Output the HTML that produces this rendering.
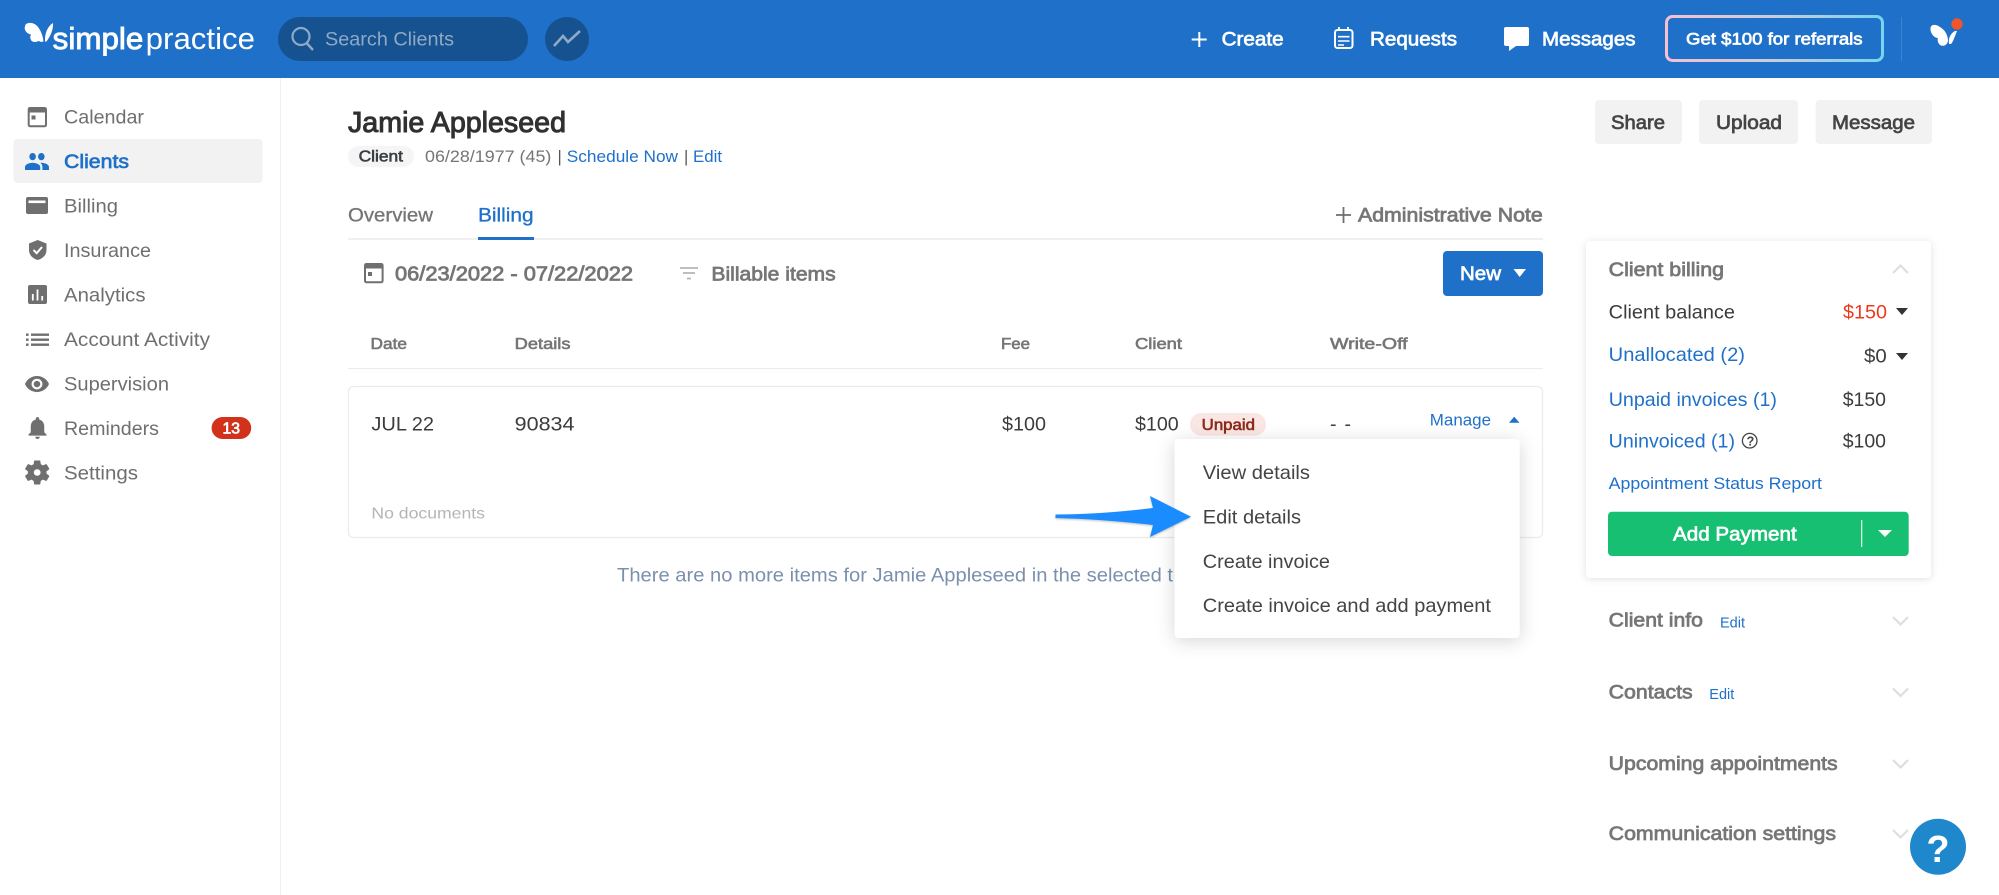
<!DOCTYPE html>
<html lang="en">
<head>
<meta charset="utf-8">
<title>Jamie Appleseed - SimplePractice</title>
<style>
html,body{margin:0;padding:0;background:#fff;width:1999px;height:895px;overflow:hidden}
svg{display:block;font-family:"Liberation Sans",Arial,sans-serif}
text{white-space:pre}
#root{filter:blur(.35px)}
.nav{font-size:19.5px;fill:#6f6f6f}
.blue{fill:#1f70c9}
.hd{font-size:19.5px;fill:#767676;stroke:#767676;stroke-width:.75}
.row{font-size:19.5px;fill:#3c3c3c}
.th{font-size:16px;fill:#757575;stroke:#757575;stroke-width:.6}
.wh{fill:#fff}
.wsb{fill:#fff;stroke:#fff;stroke-width:.7}
.btn{font-size:19.5px;fill:#444;stroke:#444;stroke-width:.7}
.menu{font-size:19.5px;fill:#444}
.m{stroke-width:.3}
.card{filter:drop-shadow(0 1px 4px rgba(0,0,0,.12))}
.menuBox{filter:drop-shadow(0 3px 9px rgba(0,0,0,.16))}
.chev{fill:none;stroke:#dedede;stroke-width:2.2}
</style>
</head>
<body>
<svg width="1999" height="895" viewBox="0 0 1999 895" xmlns="http://www.w3.org/2000/svg">
<defs>
<linearGradient id="ref" x1="0" x2="1" y1="0" y2="0"><stop offset="0" stop-color="#f6c0cf"/><stop offset=".5" stop-color="#c9cdd8"/><stop offset="1" stop-color="#78d3ee"/></linearGradient>
</defs>
<g id="root">
<rect x="-2" y="-2" width="2003" height="899" fill="#fff"/>

<!-- Header -->
<rect x="-2" y="-2" width="2003" height="80" fill="#1f70c9"/>
<g fill="#fff">
<path d="M25.5 24.5C29 21.5 35 23 38 27C41 31 43 36 43.500 41.500C41 42.500 39 41 38.500 41C36 42.500 32 42.500 31 40C30 38 30 36 31 34.500C27 34 24 30 24.800 27Z"/>
<path d="M45 41C44.500 33 48 26 53 23C53.500 30 50 37 46 42Z"/>
</g>
<text x="52.7" y="49" font-size="31" fill="#fff" stroke="#fff" stroke-width=".9" textLength="90.6" lengthAdjust="spacingAndGlyphs">simple</text>
<text x="145.7" y="49" font-size="31" fill="#fff" textLength="109.3" lengthAdjust="spacingAndGlyphs">practice</text>

<rect x="278" y="17" width="250" height="44" rx="22" fill="#15528f"/>
<ellipse cx="301" cy="36.5" rx="8.5" ry="8.5" fill="none" stroke="#8fa9c6" stroke-width="2.2"/>
<path d="M307 43.5L313 50" stroke="#8fa9c6" stroke-width="2.4" fill="none"/>
<text x="325" y="45.5" font-size="19.5" fill="#8fa9c6" textLength="129" lengthAdjust="spacingAndGlyphs">Search Clients</text>
<circle cx="567" cy="39" r="22" fill="#15528f"/>
<path d="M554 46L563 36L568 42L580 31" fill="none" stroke="#8fa9c6" stroke-width="2.6"/>

<path d="M1199.3 32V47M1191.7 39.5H1206.7" stroke="#fff" stroke-width="2" fill="none"/>
<text x="1221.6" y="45.5" font-size="19.5" class="wsb" textLength="62" lengthAdjust="spacingAndGlyphs">Create</text>
<rect x="1335" y="30" width="17.5" height="18" rx="2.5" fill="none" stroke="#fff" stroke-width="2"/>
<path d="M1339 27V31M1348 27V31" stroke="#fff" stroke-width="1.8"/>
<path d="M1338 36.7H1349.5M1338 41H1349.5M1338 45H1344" stroke="#fff" stroke-width="1.6"/>
<text x="1370" y="45.5" font-size="19.5" class="wsb" textLength="87" lengthAdjust="spacingAndGlyphs">Requests</text>
<path d="M1506 27H1527Q1529 27 1529 29V44Q1529 46 1527 46H1516L1509 51V46H1506Q1504 46 1504 44V29Q1504 27 1506 27Z" fill="#fff"/>
<text x="1542" y="45.5" font-size="19.5" class="wsb" textLength="93.5" lengthAdjust="spacingAndGlyphs">Messages</text>
<rect x="1666.5" y="16.5" width="216" height="44" rx="6" fill="none" stroke="url(#ref)" stroke-width="3"/>
<text x="1686" y="44.5" font-size="17" class="wsb" textLength="176.6" lengthAdjust="spacingAndGlyphs">Get $100 for referrals</text>
<rect x="1901" y="17" width="1" height="44" fill="#3c83d2"/>
<g fill="#fff">
<path d="M1930.5 28C1931 24 1936 24 1940 27C1945 30 1948 35 1948 41C1947 45 1944 46.5 1941 45.5C1938 44 1937 40 1938 38C1934 38 1930 33 1930.5 28Z"/>
<path d="M1949 44C1948 38 1951 33 1955 31L1957 31C1955 36 1953 42 1951 44Z"/>
</g>
<circle cx="1957" cy="24" r="5.7" fill="#f0562a"/>

<!-- Sidebar -->
<rect x="280" y="78" width="1" height="817" fill="#f0f0f0"/>
<rect x="13.5" y="139" width="249" height="44" rx="4" fill="#f2f2f2"/>

<rect x="28.7" y="108" width="17.3" height="18.3" rx="1.5" fill="none" stroke="#6f6f6f" stroke-width="2"/>
<rect x="28" y="107.5" width="18.5" height="5" fill="#6f6f6f"/>
<rect x="31.5" y="115.5" width="4" height="4" fill="#6f6f6f"/>
<text x="64" y="123.5" class="nav" textLength="80" lengthAdjust="spacingAndGlyphs">Calendar</text>

<path transform="translate(23.9 147) scale(1.09 1.21)" fill="#1f70c9" d="M16 11c1.66 0 2.99-1.34 2.99-3S17.66 5 16 5c-1.66 0-3 1.34-3 3s1.34 3 3 3zm-8 0c1.66 0 2.99-1.34 2.99-3S9.66 5 8 5C6.34 5 5 6.34 5 8s1.34 3 3 3zm0 2c-2.33 0-7 1.17-7 3.5V19h14v-2.5c0-2.33-4.67-3.5-7-3.5zm8 0c-.29 0-.62.02-.97.05 1.16.84 1.97 1.97 1.97 3.45V19h6v-2.5c0-2.33-4.67-3.5-7-3.5z"/>
<text x="64" y="168" font-size="19.5" fill="#1f70c9" stroke="#1f70c9" stroke-width=".7" textLength="65" lengthAdjust="spacingAndGlyphs">Clients</text>

<rect x="26" y="197" width="22" height="17" rx="2" fill="#6f6f6f"/>
<rect x="28.5" y="200.5" width="17" height="2.6" fill="#fff"/>
<text x="64" y="212.5" class="nav" textLength="54" lengthAdjust="spacingAndGlyphs">Billing</text>

<path d="M37.7 240L46.5 243.5V250C46.5 255 43 258.5 37.7 260C32.5 258.5 29 255 29 250V243.5Z" fill="#6f6f6f"/>
<path d="M33.5 250L36.7 253.2L42 247" fill="none" stroke="#fff" stroke-width="2"/>
<text x="64" y="257" class="nav" textLength="87" lengthAdjust="spacingAndGlyphs">Insurance</text>

<rect x="28" y="285" width="19" height="19" rx="2" fill="#6f6f6f"/>
<path d="M32.8 294V300.5M37.5 289.5V300.5M42.2 296V300.5" stroke="#fff" stroke-width="1.8"/>
<text x="64" y="301.5" class="nav" textLength="81.5" lengthAdjust="spacingAndGlyphs">Analytics</text>

<g fill="#6f6f6f">
<rect x="26" y="333.5" width="2.6" height="2.4"/><rect x="31" y="333.5" width="18" height="2.4"/>
<rect x="26" y="338.5" width="2.6" height="2.4"/><rect x="31" y="338.5" width="18" height="2.4"/>
<rect x="26" y="343.5" width="2.6" height="2.4"/><rect x="31" y="343.5" width="18" height="2.4"/>
</g>
<text x="64" y="346" class="nav" textLength="146" lengthAdjust="spacingAndGlyphs">Account Activity</text>

<path transform="translate(23.9 371.2) scale(1.09 1.07)" fill="#6f6f6f" d="M12 4.5C7 4.5 2.73 7.61 1 12c1.73 4.39 6 7.5 11 7.5s9.27-3.11 11-7.5c-1.73-4.39-6-7.5-11-7.5zM12 17c-2.76 0-5-2.24-5-5s2.24-5 5-5 5 2.24 5 5-2.24 5-5 5zm0-8c-1.66 0-3 1.34-3 3s1.34 3 3 3 3-1.34 3-3-1.34-3-3-3z"/>
<text x="64" y="390.5" class="nav" textLength="105" lengthAdjust="spacingAndGlyphs">Supervision</text>

<path transform="translate(24 414.2) scale(1.125 1.128)" fill="#6f6f6f" d="M12 22c1.1 0 2-.9 2-2h-4c0 1.1.89 2 2 2zm6-6v-5c0-3.07-1.64-5.64-4.5-6.32V4c0-.83-.67-1.5-1.5-1.5s-1.5.67-1.5 1.5v.68C7.63 5.36 6 7.92 6 11v5l-2 2v1h16v-1l-2-2z"/>
<text x="64" y="435" class="nav" textLength="95" lengthAdjust="spacingAndGlyphs">Reminders</text>
<rect x="211.6" y="417" width="39.6" height="22" rx="11" fill="#d2321a"/>
<text x="222.5" y="433.5" font-size="16" class="wsb" textLength="17.5" lengthAdjust="spacingAndGlyphs">13</text>

<path transform="translate(21.6 457.5) scale(1.3 1.25)" fill="#6f6f6f" d="M19.14 12.94c.04-.3.06-.61.06-.94 0-.32-.02-.64-.07-.94l2.03-1.58c.18-.14.23-.41.12-.61l-1.92-3.32c-.12-.22-.37-.29-.59-.22l-2.39.96c-.5-.38-1.03-.7-1.62-.94l-.36-2.54c-.04-.24-.24-.41-.48-.41h-3.84c-.24 0-.43.17-.47.41l-.36 2.54c-.59.24-1.13.57-1.62.94l-2.39-.96c-.22-.08-.47 0-.59.22L2.74 8.87c-.12.21-.08.47.12.61l2.03 1.58c-.05.3-.09.63-.09.94s.02.64.07.94l-2.03 1.58c-.18.14-.23.41-.12.61l1.92 3.32c.12.22.37.29.59.22l2.39-.96c.5.38 1.03.7 1.62.94l.36 2.54c.05.24.24.41.48.41h3.84c.24 0 .44-.17.47-.41l.36-2.54c.59-.24 1.13-.56 1.62-.94l2.39.96c.22.08.47 0 .59-.22l1.92-3.32c.12-.22.07-.47-.12-.61l-2.01-1.58zM12 14.6c-1.43 0-2.6-1.17-2.6-2.6s1.17-2.6 2.6-2.6 2.6 1.17 2.6 2.6-1.17 2.6-2.6 2.6z"/>
<text x="64" y="479.5" class="nav" textLength="74" lengthAdjust="spacingAndGlyphs">Settings</text>

<!-- Client title -->
<text x="348" y="132" font-size="28.5" fill="#303030" stroke="#303030" stroke-width="1" textLength="218" lengthAdjust="spacingAndGlyphs">Jamie Appleseed</text>
<rect x="348" y="146" width="66" height="21" rx="10.5" fill="#f5f5f5"/>
<text x="358.6" y="161.7" font-size="15.5" fill="#3a3f45" stroke="#3a3f45" stroke-width=".6" textLength="44.4" lengthAdjust="spacingAndGlyphs">Client</text>
<text x="425" y="162" font-size="17" fill="#757575" textLength="126.4" lengthAdjust="spacingAndGlyphs">06/28/1977 (45)</text>
<text x="557.5" y="162" font-size="16.5" fill="#555">|</text>
<text x="566.8" y="162" font-size="17" class="blue" textLength="111.2" lengthAdjust="spacingAndGlyphs">Schedule Now</text>
<text x="684" y="162" font-size="16.5" fill="#555">|</text>
<text x="693" y="162" font-size="17" class="blue" textLength="29" lengthAdjust="spacingAndGlyphs">Edit</text>

<!-- Action buttons -->
<rect x="1595" y="100" width="87" height="44" rx="4" fill="#f2f2f2"/>
<text x="1611" y="129" class="btn" textLength="54" lengthAdjust="spacingAndGlyphs">Share</text>
<rect x="1699" y="100" width="99" height="44" rx="4" fill="#f2f2f2"/>
<text x="1716" y="129" class="btn" textLength="66" lengthAdjust="spacingAndGlyphs">Upload</text>
<rect x="1815.6" y="100" width="116.4" height="44" rx="4" fill="#f2f2f2"/>
<text x="1832" y="129" class="btn" textLength="83" lengthAdjust="spacingAndGlyphs">Message</text>

<!-- Tabs -->
<rect x="348" y="238" width="1195" height="2" fill="#f0f0f0"/>
<text x="348" y="221.7" font-size="19.5" fill="#757575" stroke="#757575" class="m" textLength="85" lengthAdjust="spacingAndGlyphs">Overview</text>
<text x="478" y="221.7" font-size="19.5" fill="#1f70c9" stroke="#1f70c9" class="m" textLength="55.6" lengthAdjust="spacingAndGlyphs">Billing</text>
<rect x="478" y="237" width="56" height="3" fill="#1f70c9"/>
<path d="M1343.5 207V223M1336 215H1351" stroke="#6f6f6f" stroke-width="1.8"/>
<text x="1358" y="221.7" class="hd" textLength="184.7" lengthAdjust="spacingAndGlyphs">Administrative Note</text>

<!-- Filters -->
<rect x="365" y="264" width="17.6" height="18.3" rx="1.5" fill="none" stroke="#6f6f6f" stroke-width="2"/>
<rect x="364.5" y="263.5" width="18.6" height="5" fill="#6f6f6f"/>
<rect x="368" y="272" width="4" height="4" fill="#6f6f6f"/>
<text x="395" y="280.5" font-size="20" fill="#757575" stroke="#757575" stroke-width=".8" textLength="238" lengthAdjust="spacingAndGlyphs">06/23/2022 - 07/22/2022</text>
<path d="M680 268H698M683 273H695M687 278.5H691" stroke="#b5b5b5" stroke-width="1.7"/>
<text x="711.4" y="280.3" class="hd" textLength="124.3" lengthAdjust="spacingAndGlyphs">Billable items</text>
<rect x="1443" y="251" width="100" height="45" rx="4" fill="#1f70c9"/>
<text x="1460" y="280" font-size="19.5" class="wsb" textLength="41" lengthAdjust="spacingAndGlyphs">New</text>
<path d="M1513.5 269H1526L1519.7 277Z" fill="#fff"/>

<!-- Table -->
<text x="370.5" y="349" class="th" textLength="36.5" lengthAdjust="spacingAndGlyphs">Date</text>
<text x="514.7" y="349" class="th" textLength="55.8" lengthAdjust="spacingAndGlyphs">Details</text>
<text x="1001" y="349" class="th" textLength="29" lengthAdjust="spacingAndGlyphs">Fee</text>
<text x="1135" y="349" class="th" textLength="47" lengthAdjust="spacingAndGlyphs">Client</text>
<text x="1330" y="349" class="th" textLength="77.6" lengthAdjust="spacingAndGlyphs">Write-Off</text>
<rect x="348" y="368" width="1195" height="1" fill="#ebebeb"/>

<rect x="348.5" y="386.5" width="1194" height="151" rx="5" fill="#fff" stroke="#ebebeb" stroke-width="1.2"/>
<text x="371.4" y="430.7" class="row" textLength="62.6" lengthAdjust="spacingAndGlyphs">JUL 22</text>
<text x="514.7" y="430.7" class="row" textLength="59.8" lengthAdjust="spacingAndGlyphs">90834</text>
<text x="1002" y="430.7" class="row" textLength="44" lengthAdjust="spacingAndGlyphs">$100</text>
<text x="1135" y="430.7" class="row" textLength="43.7" lengthAdjust="spacingAndGlyphs">$100</text>
<rect x="1190" y="413" width="76" height="22.7" rx="11.3" fill="#fae7e4"/>
<text x="1201.7" y="430" font-size="15.5" fill="#8e2a1c" stroke="#8e2a1c" stroke-width=".6" textLength="53.3" lengthAdjust="spacingAndGlyphs">Unpaid</text>
<text x="1330" y="430.7" class="row" textLength="21" lengthAdjust="spacing">- -</text>
<text x="1429.8" y="425.3" font-size="17" class="blue" textLength="61.2" lengthAdjust="spacingAndGlyphs">Manage</text>
<path d="M1509 422.7H1519.5L1514.2 416.7Z" fill="#1f70c9"/>
<text x="371.4" y="518.7" font-size="16" fill="#b5b5b5" textLength="113.6" lengthAdjust="spacingAndGlyphs">No documents</text>

<text x="617" y="581.7" font-size="19.5" fill="#7a90ad" textLength="556" lengthAdjust="spacingAndGlyphs">There are no more items for Jamie Appleseed in the selected t</text>

<!-- Dropdown -->
<rect class="menuBox" x="1174.5" y="439" width="345.2" height="199" rx="4" fill="#fff"/>
<text x="1202.8" y="479" class="menu" textLength="107.2" lengthAdjust="spacingAndGlyphs">View details</text>
<text x="1202.8" y="523.3" class="menu" textLength="98.2" lengthAdjust="spacingAndGlyphs">Edit details</text>
<text x="1202.8" y="568" class="menu" textLength="127.2" lengthAdjust="spacingAndGlyphs">Create invoice</text>
<text x="1202.8" y="612" class="menu" textLength="288.2" lengthAdjust="spacingAndGlyphs">Create invoice and add payment</text>

<!-- Arrow -->
<path d="M1055.5 514.5Q1100 514.5 1153 508L1150 496L1191 516.7L1150 537L1153 525Q1100 519 1055.5 518Z" fill="#1a8cff" style="filter:drop-shadow(0 1px 1px rgba(0,0,0,.25))"/>

<!-- Client billing card -->
<rect class="card" x="1586" y="241" width="345" height="337" rx="4" fill="#fff"/>
<text x="1608.7" y="276" class="hd" textLength="115.3" lengthAdjust="spacingAndGlyphs">Client billing</text>
<path class="chev" d="M1893 273L1900.5 265.5L1908 273"/>
<text x="1608.7" y="318.3" class="row" textLength="126.3" lengthAdjust="spacingAndGlyphs">Client balance</text>
<text x="1843" y="318.3" font-size="19.5" fill="#f0391c" textLength="44" lengthAdjust="spacingAndGlyphs">$150</text>
<path d="M1896 308H1908L1902 315Z" fill="#333"/>
<text x="1608.7" y="361" font-size="19.5" class="blue" textLength="136.3" lengthAdjust="spacingAndGlyphs">Unallocated (2)</text>
<text x="1864" y="362.3" class="row" textLength="22.7" lengthAdjust="spacingAndGlyphs">$0</text>
<path d="M1896 353H1908L1902 360Z" fill="#333"/>
<text x="1608.7" y="406" font-size="19.5" class="blue" textLength="168.3" lengthAdjust="spacingAndGlyphs">Unpaid invoices (1)</text>
<text x="1842.7" y="406" class="row" textLength="43.3" lengthAdjust="spacingAndGlyphs">$150</text>
<text x="1608.7" y="447.3" font-size="19.5" class="blue" textLength="126.3" lengthAdjust="spacingAndGlyphs">Uninvoiced (1)</text>
<circle cx="1749.7" cy="440.7" r="7.3" fill="none" stroke="#444" stroke-width="1.3"/>
<text x="1746.6" y="445.3" font-size="12.5" font-weight="bold" fill="#444">?</text>
<text x="1842.7" y="447.3" class="row" textLength="43.3" lengthAdjust="spacingAndGlyphs">$100</text>
<text x="1608.7" y="489" font-size="17" class="blue" textLength="213.3" lengthAdjust="spacingAndGlyphs">Appointment Status Report</text>
<rect x="1608" y="511.7" width="300.7" height="44.3" rx="4" fill="#17bf72"/>
<text x="1673" y="540.7" font-size="19.5" class="wsb" textLength="123.7" lengthAdjust="spacingAndGlyphs">Add Payment</text>
<rect x="1861" y="520" width="1.3" height="27" fill="#d9f5e7"/>
<path d="M1878 530H1892L1885 537Z" fill="#fff"/>

<!-- Collapsed sections -->
<text x="1608.7" y="626.7" class="hd" textLength="94.3" lengthAdjust="spacingAndGlyphs">Client info</text>
<text x="1720" y="627.3" font-size="15" class="blue" textLength="25" lengthAdjust="spacingAndGlyphs">Edit</text>
<path class="chev" d="M1893 617L1900.5 624.5L1908 617"/>
<text x="1608.7" y="698.3" class="hd" textLength="84" lengthAdjust="spacingAndGlyphs">Contacts</text>
<text x="1709.3" y="699" font-size="15" class="blue" textLength="25" lengthAdjust="spacingAndGlyphs">Edit</text>
<path class="chev" d="M1893 688.5L1900.5 696L1908 688.5"/>
<text x="1608.7" y="770" class="hd" textLength="229" lengthAdjust="spacingAndGlyphs">Upcoming appointments</text>
<path class="chev" d="M1893 760L1900.5 767.5L1908 760"/>
<text x="1608.7" y="840" class="hd" textLength="227.3" lengthAdjust="spacingAndGlyphs">Communication settings</text>
<path class="chev" d="M1893 830L1900.5 837.5L1908 830"/>

<!-- Help -->
<circle cx="1938" cy="846.7" r="28" fill="#1f88cc"/>
<text x="1926.5" y="862" font-size="38" font-weight="bold" fill="#fff" textLength="23" lengthAdjust="spacingAndGlyphs">?</text>
</g>
</svg>
</body>
</html>
